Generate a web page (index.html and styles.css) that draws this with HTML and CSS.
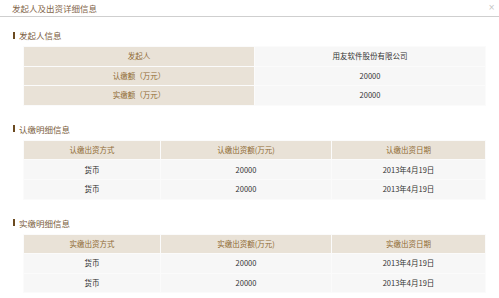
FILE: index.html
```html
<!DOCTYPE html>
<html lang="zh-CN">
<head>
<meta charset="utf-8">
<title>发起人及出资详细信息</title>
<link rel="stylesheet" href="styles.css">
</head>
<body>
<div class="dialog">
  <div class="dialog-header">
    <span class="dialog-title">发起人及出资详细信息</span>
    <span class="close">×</span>
  </div>
  <div class="dialog-body">
    <div class="section">
      <div class="section-title">发起人信息</div>
      <table class="info two">
        <tr><th>发起人</th><td>用友软件股份有限公司</td></tr>
        <tr><th>认缴额（万元）</th><td>20000</td></tr>
        <tr><th>实缴额（万元）</th><td>20000</td></tr>
      </table>
    </div>
    <div class="section">
      <div class="section-title">认缴明细信息</div>
      <table class="info three">
        <tr><th>认缴出资方式</th><th>认缴出资额(万元)</th><th>认缴出资日期</th></tr>
        <tr><td>货币</td><td>20000</td><td>2013年4月19日</td></tr>
        <tr><td>货币</td><td>20000</td><td>2013年4月19日</td></tr>
      </table>
    </div>
    <div class="section">
      <div class="section-title">实缴明细信息</div>
      <table class="info three">
        <tr><th>实缴出资方式</th><th>实缴出资额(万元)</th><th>实缴出资日期</th></tr>
        <tr><td>货币</td><td>20000</td><td>2013年4月19日</td></tr>
        <tr><td>货币</td><td>20000</td><td>2013年4月19日</td></tr>
      </table>
    </div>
  </div>
</div>
</body>
</html>
```
FILE: styles.css
```css
html, body {
  margin: 0;
  padding: 0;
  background: #fff;
}
body {
  font-family: "Noto Sans CJK SC", "Noto Sans", sans-serif;
  color: #333;
}
.dialog-header {
  height: 16px;
  border-bottom: 1px solid #cfcfcf;
  display: flex;
  align-items: center;
  justify-content: space-between;
  padding: 0 4px 0 12px;
}
.dialog-title {
  font-size: 8.5px;
  line-height: 14px;
  color: #7f6448;
}
.close {
  font-size: 8px;
  line-height: 14px;
  color: #c4c4c4;
  font-family: "DejaVu Sans", sans-serif;
}
.dialog-body {
  padding: 12px 14px 0 13px;
}
.section {
  margin-bottom: 17px;
}
.section-title {
  height: 12px;
  line-height: 12px;
  font-size: 8.5px;
  color: #7a5c3d;
  display: flex;
  align-items: center;
  gap: 4px;
  margin-bottom: 5px;
}
.section-title::before {
  content: "";
  width: 2px;
  height: 7px;
  background: #6b4a20;
}
.info {
  margin-left: 10px;
  width: 463px;
  border-collapse: collapse;
  table-layout: fixed;
  font-size: 7.5px;
  line-height: 10px;
}
.info tr {
  height: 19.6px;
}
.info th, .info td {
  padding: 0;
  text-align: center;
  border: 1px solid #fbfbfb;
  font-weight: normal;
}
.info th {
  background: #e9e2d7;
  color: #8f6a33;
}
.info td {
  background: #f7f7f7;
  color: #333;
}
.two th { width: 230px; }
.three th:nth-child(1) { width: 136px; }
.three th:nth-child(2) { width: 170px; }
```
